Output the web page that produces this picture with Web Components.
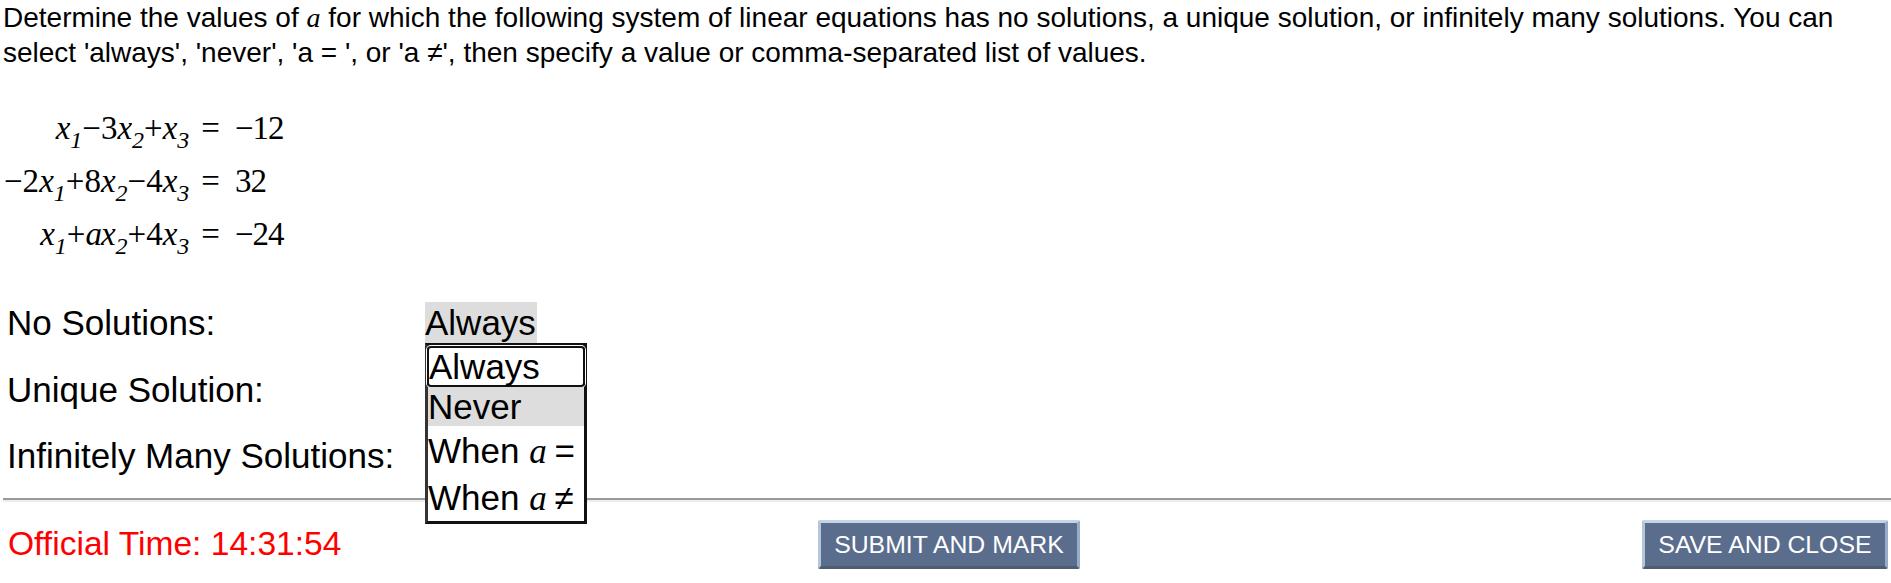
<!DOCTYPE html>
<html><head><meta charset="utf-8"><style>
html,body{margin:0;padding:0;background:#fff}
body{font-family:"Liberation Sans",Arial,sans-serif;color:#000;height:583px;overflow:hidden}
</style></head><body>
<quiz-page></quiz-page>
<script>
const def=(name,css,html)=>customElements.define(name,class extends HTMLElement{constructor(){super();this.attachShadow({mode:'open'}).innerHTML=`<style>${css}</style>${html}`}});
const MATH='"Liberation Serif","Times New Roman",serif';
def('eq-system',`:host{display:grid;grid-template-columns:auto auto auto;justify-content:start;font:italic 33px ${MATH};column-gap:12px;row-gap:0;margin:0 0 0 4px}
.l{text-align:right;height:53px;line-height:53px;white-space:nowrap}.e,.r{font-style:normal;height:53px;line-height:53px}.r{padding-left:3px;letter-spacing:-1px}
i{font-style:normal}
sub{font-size:24px;line-height:0;vertical-align:-9px}
.n{letter-spacing:-1px}`,`
<div class="l">x<sub>1</sub><i>−3</i>x<sub>2</sub><i>+</i>x<sub>3</sub></div><div class="e">=</div><div class="r">−12</div>
<div class="l"><i>−2</i>x<sub>1</sub><i>+8</i>x<sub>2</sub><i>−4</i>x<sub>3</sub></div><div class="e">=</div><div class="r">32</div>
<div class="l">x<sub>1</sub><i>+</i><span class="n">a</span>x<sub>2</sub><i>+4</i>x<sub>3</sub></div><div class="e">=</div><div class="r">−24</div>`);
def('answer-row',`:host{display:grid;grid-template-columns:418px auto;justify-content:start;align-items:center;height:66.5px;font-size:35px;padding-left:7px}
::slotted([slot=v]){background:#ddd;line-height:42px;height:42px;display:block;padding-right:1px}`,`<div><slot></slot></div><div><slot name="v"></slot></div>`);
def('drop-menu',`:host{position:absolute;left:0;top:53px;width:162px;box-sizing:border-box;border:3px solid #111;border-left-color:#333;background:#fff;font-size:35px;z-index:2;display:flex;flex-direction:column}
.o{height:46px;line-height:46px;padding-left:0;white-space:nowrap;box-sizing:border-box}
.f{height:41px;line-height:37px;border:2px solid #111;border-radius:4px;box-shadow:0 0 0 1px #fff;margin:0 -1px 0 -1px}
.h{background:#ddd;height:39px;line-height:39px}
.w{height:47px;line-height:47px}
.s{padding-top:1px;box-sizing:content-box}
.m{font:italic 35px/36px ${MATH};display:inline-block;margin-right:-2px}`,`<div class="o f">Always</div><div class="o h">Never</div><div class="o w s">When <span class="m">a</span> =</div><div class="o w">When <span class="m">a</span> ≠</div>`);
def('action-btn',`:host{display:inline-block}button{all:unset;box-sizing:border-box;display:block;height:49px;padding:0 13.5px;font:24.8px/43px "Liberation Sans",Arial,sans-serif;color:#fff;background:#5a6d8d;border-style:solid;border-width:3px;border-color:#c6d5e6 #97aec8 #4f5d6c #b5c6d9;border-radius:2px;white-space:nowrap}`,`<button><slot></slot></button>`);
def('quiz-page',`:host{display:flex;flex-direction:column;height:583px;box-sizing:border-box;position:relative}
p{margin:0;padding:0 0 0 3px;font-size:28px;line-height:35px}
p span.l{display:block;white-space:nowrap}
hr{margin:0 0 0 3px;border:0;border-top:2px solid #999;border-bottom:2px solid #eee;height:0}
.foot{display:grid;grid-template-columns:1fr auto 1fr;align-items:center;padding:18px 3px 0 8px}
.t{color:#f00;font-size:33.6px}.r{justify-self:end}.c{margin-left:2px}
.m{font-family:${MATH};font-style:italic;display:inline-block;line-height:28px}
eq-system{margin-top:32px}
.answers{margin:29px 0 8px;position:relative}
.anchor{position:absolute;left:425px;top:0}`,`
<p><span class="l">Determine the values of <span class="m">a</span> for which the following system of linear equations has no solutions, a unique solution, or infinitely many solutions. You can</span><span class="l">select 'always', 'never', 'a = ', or 'a ≠', then specify a value or comma-separated list of values.</span></p>
<eq-system></eq-system>
<div class="answers">
<answer-row>No Solutions:<span slot="v">Always</span></answer-row>
<answer-row>Unique Solution:</answer-row>
<answer-row>Infinitely Many Solutions:</answer-row>
<div class="anchor"><drop-menu></drop-menu></div>
</div>
<hr>
<div class="foot"><div class="t">Official Time: 14:31:54</div><action-btn class="c">SUBMIT AND MARK</action-btn><action-btn class="r">SAVE AND CLOSE</action-btn></div>`);
</script>
</body></html>
